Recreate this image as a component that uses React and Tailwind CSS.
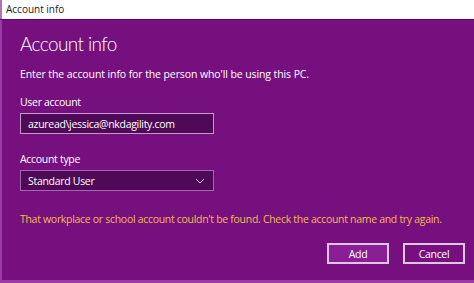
import React from 'react'

function App() {
  return (
    <div className="w-[474px] h-[283px] flex flex-col overflow-hidden bg-[#77107f]" style={{ fontFamily: '"Open Sans", "Noto Sans", sans-serif' }}>
      {/* Title bar */}
      <div className="h-[19px] bg-white border-l-2 border-[#b76dbd] flex items-center pl-[4px] text-[10px] text-[#222]">
        Account info
      </div>
      <div className="h-px bg-[#5a0b60]" />

      <div className="flex-1 flex border-l-2 border-b-[3px] border-[#9a3aa3]">
        <div className="flex-1 flex flex-col pl-[18px] pr-[9px] text-[10.5px] leading-[16px] tracking-[-0.3px] text-white">
          <h1 className="mt-[11px] text-[19px] leading-[26px] font-light tracking-[-0.6px]" style={{ fontFamily: 'Lato, "Open Sans", sans-serif' }}>Account info</h1>
          <p className="mt-[9px] whitespace-nowrap tracking-[-0.1px]">
            Enter the account info for the person who'll be using this PC.
          </p>

          <label className="mt-[12px]">User account</label>
          <div className="mt-[3px] w-[194px] h-[21px] border border-[#c796cc] bg-[#4e0a56] flex items-center px-[7px]">
            azuread\jessica@nkdagility.com
          </div>

          <label className="mt-[17px]">Account type</label>
          <div className="mt-[3px] w-[194px] h-[21px] border border-[#a864ae] bg-[#4e0a56] flex items-center justify-between px-[7px]">
            <span>Standard User</span>
            <svg width="10" height="6" viewBox="0 0 10 6" className="mr-[1px]">
              <path d="M1 1 L5 5 L9 1" fill="none" stroke="#d9b4dd" strokeWidth="1" />
            </svg>
          </div>

          <p className="mt-[20px] whitespace-nowrap text-[#f4bb4a]">
            That workplace or school account couldn't be found. Check the account name and try again.
          </p>

          <div className="mt-[16px] flex justify-end gap-[14px]">
            <button className="w-[62px] h-[21px] border-2 border-[#e3c3e6] bg-[#8a1e94]">Add</button>
            <button className="w-[62px] h-[21px] border-2 border-[#e3c3e6] bg-[#77107f]">Cancel</button>
          </div>
        </div>
      </div>
    </div>
  )
}

export default App
